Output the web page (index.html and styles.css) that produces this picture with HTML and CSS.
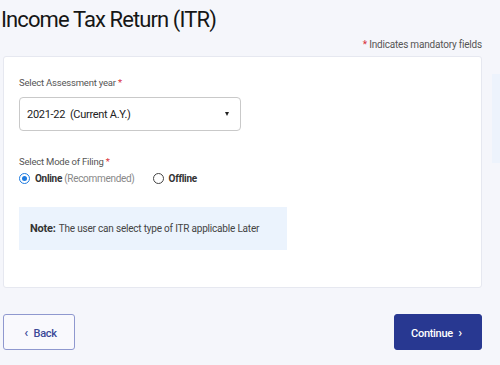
FILE: index.html
```html
<!DOCTYPE html>
<html>
<head>
<meta charset="utf-8">
<link rel="stylesheet" href="styles.css">
</head>
<body>
<div class="page">
  <h1 class="title">Income Tax Return (ITR)</h1>
  <div class="mandatory"><span class="req">*</span> Indicates mandatory fields</div>
  <div class="main">
    <div class="card">
      <label class="label">Select Assessment year <span class="req">*</span></label>
      <div class="select">
        <span>2021-22&nbsp; (Current A.Y.)</span>
        <span class="caret"></span>
      </div>
      <label class="label label-mode">Select Mode of Filing <span class="req">*</span></label>
      <div class="radios">
        <div class="radio-item">
          <span class="radio checked"></span>
          <span class="radio-text"><b>Online</b> <span class="muted">(Recommended)</span></span>
        </div>
        <div class="radio-item">
          <span class="radio"></span>
          <span class="radio-text"><b>Offline</b></span>
        </div>
      </div>
      <div class="note"><b>Note:</b> The user can select type of ITR applicable Later</div>
    </div>
    <div class="side"></div>
  </div>
  <div class="actions">
    <button class="btn btn-back"><span class="chev">‹</span> Back</button>
    <button class="btn btn-continue">Continue <span class="chev">›</span></button>
  </div>
</div>
</body>
</html>
```
FILE: styles.css
```css
html, body {
  margin: 0;
  padding: 0;
  background: #f5f6fb;
  font-family: Roboto, "Liberation Sans", sans-serif;
  color: #333;
}
.page {
  width: 500px;
  height: 365px;
  overflow: hidden;
  padding: 0 0 0 3px;
  box-sizing: border-box;
}
.title {
  margin: 0;
  padding: 5px 0 0 0;
  margin-left: -2px;
  font-size: 22px;
  font-weight: 400;
  color: #161616;
  line-height: 30px;
  letter-spacing: -0.9px;
}
.mandatory {
  width: 479px;
  text-align: right;
  font-size: 10px;
  color: #555;
  margin-top: 4px;
  line-height: 12px;
  letter-spacing: -0.2px;
}
.req { color: #d9303a; }
.main {
  display: flex;
  gap: 10px;
  margin-top: 5px;
}
.card {
  flex-shrink: 0;
  width: 479px;
  height: 232px;
  box-sizing: border-box;
  background: #fff;
  border: 1px solid #e6e8f0;
  border-radius: 3px;
  padding: 20px 15px 0 15px;
  display: flex;
  flex-direction: column;
  align-items: flex-start;
}
.side {
  flex-shrink: 0;
  width: 20px;
  height: 89px;
  margin-top: 18px;
  background: #edf3fc;
}
.label {
  font-size: 9.5px;
  color: #555;
  line-height: 12px;
  letter-spacing: -0.2px;
}
.select {
  margin-top: 8px;
  width: 222px;
  height: 34px;
  box-sizing: border-box;
  border: 1px solid #c9c9c9;
  border-radius: 4px;
  display: flex;
  align-items: center;
  justify-content: space-between;
  padding: 0 11px 0 7px;
  font-size: 11px;
  color: #222;
  letter-spacing: -0.3px;
}
.caret {
  width: 0;
  height: 0;
  border-left: 2.5px solid transparent;
  border-right: 2.5px solid transparent;
  border-top: 4px solid #222;
}
.label-mode { margin-top: 25px; }
.radios {
  display: flex;
  gap: 18px;
  margin-top: 5px;
  align-items: center;
}
.radio-item {
  display: flex;
  align-items: center;
  gap: 5px;
  font-size: 10px;
  letter-spacing: -0.3px;
}
.radio-item b { font-weight: 700; color: #333; }
.muted { color: #888; }
.radio {
  width: 11px;
  height: 11px;
  border: 1.3px solid #444;
  border-radius: 50%;
  display: inline-block;
  box-sizing: border-box;
  position: relative;
}
.radio.checked {
  border-color: #1e7be0;
}
.radio.checked::after {
  content: "";
  position: absolute;
  left: 1.7px;
  top: 1.7px;
  width: 5px;
  height: 5px;
  border-radius: 50%;
  background: #1e7be0;
}
.note {
  margin-top: 23px;
  width: 268px;
  height: 43px;
  box-sizing: border-box;
  background: #ebf3fd;
  padding: 0 11px;
  display: flex;
  align-items: center;
  font-size: 10px;
  color: #444;
  letter-spacing: -0.2px;
  white-space: nowrap;
}
.note b { color: #333; margin-right: 3px; font-size: 11px; }
.actions {
  display: flex;
  justify-content: space-between;
  width: 479px;
  margin-top: 26px;
}
.btn {
  height: 36px;
  border-radius: 3px;
  font-family: Roboto, "Liberation Sans", sans-serif;
  font-size: 11px;
  font-weight: 500;
  letter-spacing: -0.3px;
  cursor: pointer;
}
.btn-back {
  width: 72px;
  background: #f9f9fd;
  border: 1px solid #8f98cf;
  color: #3c4897;
}
.btn-continue {
  width: 88px;
  background: #283891;
  border: 1px solid #283891;
  color: #fff;
}
.chev { font-size: 13px; margin: 0 3px; }
```
